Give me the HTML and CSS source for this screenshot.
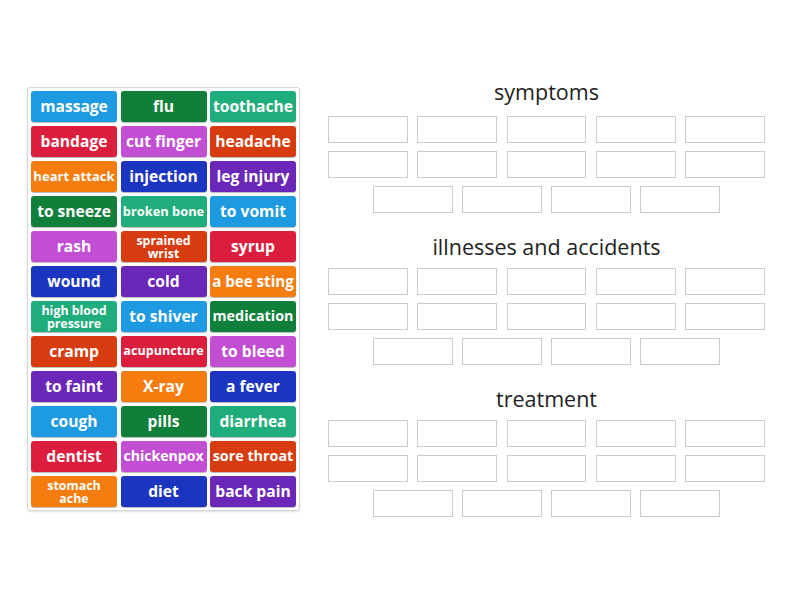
FILE: index.html
```html
<!DOCTYPE html>
<html lang="en">

<head>
  <meta charset="UTF-8">
  <meta name="viewport" content="width=device-width, initial-scale=1.0">
  <title>Health Group Sort</title>
  <link rel="stylesheet" href="styles.css">
</head>

<body>
  <div class="board">
    <div class="tray">
      <div class="tile sky"><span>massage</span></div>
      <div class="tile green"><span>flu</span></div>
      <div class="tile teal"><span>toothache</span></div>

      <div class="tile red"><span>bandage</span></div>
      <div class="tile violet"><span>cut finger</span></div>
      <div class="tile rust"><span>headache</span></div>

      <div class="tile orange"><span>heart attack</span></div>
      <div class="tile blue"><span>injection</span></div>
      <div class="tile purple"><span>leg injury</span></div>

      <div class="tile green"><span>to sneeze</span></div>
      <div class="tile teal"><span>broken bone</span></div>
      <div class="tile sky"><span>to vomit</span></div>

      <div class="tile violet"><span>rash</span></div>
      <div class="tile rust wrap"><span>sprained wrist</span></div>
      <div class="tile red"><span>syrup</span></div>

      <div class="tile blue"><span>wound</span></div>
      <div class="tile purple"><span>cold</span></div>
      <div class="tile orange"><span>a bee sting</span></div>

      <div class="tile teal wrap"><span>high blood pressure</span></div>
      <div class="tile sky"><span>to shiver</span></div>
      <div class="tile green"><span>medication</span></div>

      <div class="tile rust"><span>cramp</span></div>
      <div class="tile red"><span>acupuncture</span></div>
      <div class="tile violet"><span>to bleed</span></div>

      <div class="tile purple"><span>to faint</span></div>
      <div class="tile orange"><span>X-ray</span></div>
      <div class="tile blue"><span>a fever</span></div>

      <div class="tile sky"><span>cough</span></div>
      <div class="tile green"><span>pills</span></div>
      <div class="tile teal"><span>diarrhea</span></div>

      <div class="tile red"><span>dentist</span></div>
      <div class="tile violet"><span>chickenpox</span></div>
      <div class="tile rust"><span>sore throat</span></div>

      <div class="tile orange wrap"><span>stomach ache</span></div>
      <div class="tile blue"><span>diet</span></div>
      <div class="tile purple"><span>back pain</span></div>
    </div>

    <div class="groups">
      <div class="group">
        <h2>symptoms</h2>
        <div class="slot-row"><div class="slot"></div><div class="slot"></div><div class="slot"></div><div class="slot"></div><div class="slot"></div></div>
        <div class="slot-row"><div class="slot"></div><div class="slot"></div><div class="slot"></div><div class="slot"></div><div class="slot"></div></div>
        <div class="slot-row"><div class="slot"></div><div class="slot"></div><div class="slot"></div><div class="slot"></div></div>
      </div>

      <div class="group">
        <h2>illnesses and accidents</h2>
        <div class="slot-row"><div class="slot"></div><div class="slot"></div><div class="slot"></div><div class="slot"></div><div class="slot"></div></div>
        <div class="slot-row"><div class="slot"></div><div class="slot"></div><div class="slot"></div><div class="slot"></div><div class="slot"></div></div>
        <div class="slot-row"><div class="slot"></div><div class="slot"></div><div class="slot"></div><div class="slot"></div></div>
      </div>

      <div class="group">
        <h2>treatment</h2>
        <div class="slot-row"><div class="slot"></div><div class="slot"></div><div class="slot"></div><div class="slot"></div><div class="slot"></div></div>
        <div class="slot-row"><div class="slot"></div><div class="slot"></div><div class="slot"></div><div class="slot"></div><div class="slot"></div></div>
        <div class="slot-row"><div class="slot"></div><div class="slot"></div><div class="slot"></div><div class="slot"></div></div>
      </div>
    </div>
  </div>

  <script src="fit.js"></script>
</body>

</html>
```

FILE: styles.css
```css
body {
  margin: 0;
  background: #fff;
  font-family: "Open Sans", "Liberation Sans", sans-serif;
  color: #222;
}

.board {
  display: flex;
  align-items: flex-start;
  gap: 28px;
  padding: 78px 0 0 27px;
}

/* tray of cards still to sort */
.tray {
  margin-top: 9px;
  display: grid;
  grid-template-columns: repeat(3, 86px);
  grid-auto-rows: 31px;
  column-gap: 3.5px;
  row-gap: 4px;
  padding: 3px;
  border: 1px solid #d6d6d6;
  border-radius: 3px;
  box-shadow: 0 1px 2px rgba(0, 0, 0, 0.12);
  background: #fff;
}

.tile {
  display: flex;
  align-items: center;
  justify-content: center;
  overflow: hidden;
  border-radius: 3px;
  box-shadow: 0 1px 0 rgba(0, 0, 0, 0.25);
  color: #fff;
  font-weight: 700;
  font-size: 15.6px;
  line-height: 1;
  text-align: center;
}

.tile span {
  display: inline-block;
  white-space: nowrap;
}

.tile.wrap span {
  white-space: normal;
  font-size: 12.4px;
  line-height: 13px;
  max-width: 72px;
}

.sky { background: #1e9ae0; }
.green { background: #0f7f3a; }
.teal { background: #1fad7c; }
.red { background: #db1e3e; }
.violet { background: #c24fd3; }
.rust { background: #d63c10; }
.orange { background: #f57c0f; }
.blue { background: #1b35c0; }
.purple { background: #6a27b8; }

/* drop targets */
.groups {
  width: 437px;
}

.group + .group {
  margin-top: 20px;
}

.group h2 {
  margin: 0 0 7px;
  font-size: 21.5px;
  font-weight: 400;
  line-height: 28px;
  text-align: center;
  color: #222;
}

.group:first-child h2 {
  margin-bottom: 10px;
}

.slot-row {
  display: flex;
  justify-content: center;
  gap: 9.3px;
}

.slot-row + .slot-row {
  margin-top: 8px;
}

.slot {
  box-sizing: border-box;
  width: 80px;
  height: 27px;
  border: 1px solid #cbcbcb;
  background: #fff;
}
```

FILE: fit.js
```js
// shrink single-line labels until they fit inside their card
function fitLabels() {
  document.querySelectorAll('.tile').forEach(tile => {
    if (tile.classList.contains('wrap')) return;
    const label = tile.querySelector('span');
    const room = tile.clientWidth - 5;
    let size = 15.6;
    while (label.offsetWidth > room && size > 9) {
      size -= 0.25;
      label.style.fontSize = size + 'px';
    }
  });
}

if (document.fonts && document.fonts.ready) {
  document.fonts.ready.then(fitLabels);
} else {
  fitLabels();
}
```
